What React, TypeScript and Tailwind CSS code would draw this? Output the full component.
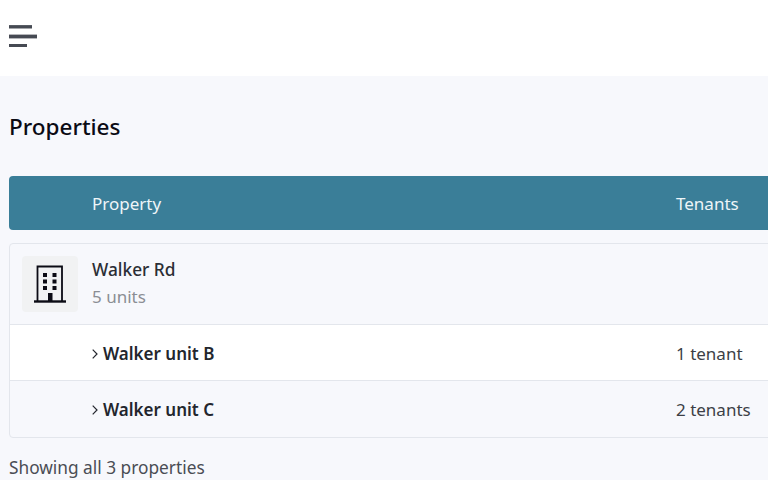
const rowGrid = 'grid grid-cols-[82px_584px_140px] items-center';

function BuildingIcon() {
  return (
    <svg width="32" height="38" viewBox="0 0 32 38" fill="none">
      <path d="M3.500 37V1.500h24.500V37" stroke="#0b0b14" strokeWidth="1.800" />
      <path d="M0 36.500h32" stroke="#0b0b14" strokeWidth="2.400" />
      <path d="M14 28h4.500v9H14z" fill="#0b0b14" />
      <path d="M9 8h4v4H9zM18.500 8h4v4h-4zM9 14.500h4v4H9zM18.500 14.500h4v4h-4zM9 21h4v4H9zM18.500 21h4v4h-4z" fill="#0b0b14" />
    </svg>
  );
}

function UnitRow({ name, tenants, white, last }: { name: string; tenants: string; white?: boolean; last?: boolean }) {
  return (
    <div className={`${rowGrid} ${last ? 'h-[57px]' : 'h-[56px]'} border-t border-[#e3e6ec] pt-[2px] ${white ? 'bg-white' : ''}`}>
      <div />
      <div className="flex items-center gap-[5px] text-[17px] font-semibold text-[#23262d]">
        <svg width="6" height="10" viewBox="0 0 6 10" fill="none">
          <path d="M.7.700l4.300 4.300-4.300 4.300" stroke="#23262d" strokeWidth="1.200" />
        </svg>
        {name}
      </div>
      <div className="text-[17px] text-[#3c3f46]">{tenants}</div>
    </div>
  );
}

export default function App() {
  return (
    <div className="h-[480px] w-[768px] overflow-hidden bg-[#f7f8fc] font-['Noto_Sans',sans-serif]">
      {/* Top bar */}
      <div className="h-[76px] bg-white pt-[25px] pl-[9px]">
        <svg width="28" height="24" viewBox="0 0 28 24" fill="none">
          <path d="M0 1.800h23" stroke="#464a53" strokeWidth="3.400" />
          <path d="M0 11.500h28" stroke="#464a53" strokeWidth="3.800" />
          <path d="M0 20.500h18" stroke="#464a53" strokeWidth="3" />
        </svg>
      </div>

      <div className="w-[820px] pl-[9px]">
        <h1 className="flex h-[100px] items-center pt-[2px] text-[22.500px] leading-none font-medium text-[#0b0b14]">
          Properties
        </h1>

        {/* Table header */}
        <div className="grid h-[54px] grid-cols-[83px_584px_140px] items-center rounded-[4px] bg-[#3a7e98] pt-[2px] text-[17px] text-[#eef5f8]">
          <div />
          <div>Property</div>
          <div>Tenants</div>
        </div>

        {/* Rows */}
        <div className="mt-[13px] rounded-[4px] border border-[#e3e6ec]">
          <div className={`${rowGrid} h-[80px]`}>
            <div className="pl-[12px]">
              <div className="flex h-[56px] w-[56px] items-center justify-center rounded-[4px] bg-[#f1f2f3]">
                <BuildingIcon />
              </div>
            </div>
            <div className="-mt-[2px]">
              <div className="h-[28px] pt-[1px] text-[17.300px] leading-[28px] font-medium text-[#2b2e35]">Walker Rd</div>
              <div className="text-[17px] leading-[28px] text-[#8b8e94]">5 units</div>
            </div>
            <div />
          </div>
          <UnitRow name="Walker unit B" tenants="1 tenant" white />
          <UnitRow name="Walker unit C" tenants="2 tenants" last />
        </div>

        <p className="mt-[18px] text-[17.300px] leading-[24px] text-[#4a4d54]">Showing all 3 properties</p>
      </div>
    </div>
  );
}
